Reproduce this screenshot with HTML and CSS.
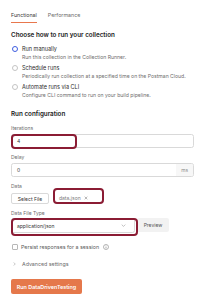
FILE: index.html
```html
<!DOCTYPE html>
<html>
<head>
<meta charset="utf-8">
<link rel="stylesheet" href="styles.css">
</head>
<body>
<div class="page">
  <div class="tabs">
    <div class="tab active">Functional</div>
    <div class="tab">Performance</div>
  </div>

  <div class="heading h1">Choose how to run your collection</div>

  <div class="options">
    <div class="option">
      <span class="radio checked"></span>
      <div class="opt-text">
        <div class="opt-title">Run manually</div>
        <div class="opt-desc">Run this collection in the Collection Runner.</div>
      </div>
    </div>
    <div class="option">
      <span class="radio"></span>
      <div class="opt-text">
        <div class="opt-title">Schedule runs</div>
        <div class="opt-desc">Periodically run collection at a specified time on the Postman Cloud.</div>
      </div>
    </div>
    <div class="option">
      <span class="radio"></span>
      <div class="opt-text">
        <div class="opt-title">Automate runs via CLI</div>
        <div class="opt-desc">Configure CLI command to run on your build pipeline.</div>
      </div>
    </div>
  </div>

  <div class="heading h2">Run configuration</div>

  <div class="field f-iter">
    <div class="label">Iterations</div>
    <div class="input-wrap">
      <div class="input">4</div>
      <div class="mark mark-iter"></div>
    </div>
  </div>

  <div class="field f-delay">
    <div class="label">Delay</div>
    <div class="input with-suffix">
      <span class="value">0</span>
      <span class="suffix">ms</span>
    </div>
  </div>

  <div class="field f-data">
    <div class="label">Data</div>
    <div class="data-row">
      <div class="btn-light">Select File</div>
      <div class="file-chip">
        <span>data.json</span>
        <svg class="x" viewBox="0 0 6 6" width="4" height="4"><path d="M1 1L5 5M5 1L1 5" stroke="#8a8a8a" stroke-width="0.9" fill="none"/></svg>
        <div class="mark mark-file"></div>
      </div>
    </div>
  </div>

  <div class="field f-type">
    <div class="label tight">Data File Type</div>
    <div class="type-row">
      <div class="select">
        <span>application/json</span>
        <svg class="chev" viewBox="0 0 8 5" width="5" height="3"><path d="M1 1L4 4L7 1" stroke="#8a8a8a" stroke-width="0.9" fill="none"/></svg>
        <div class="mark mark-select"></div>
      </div>
      <div class="btn-gray">Preview</div>
    </div>
  </div>

  <div class="check-row">
    <span class="checkbox"></span>
    <span class="check-label">Persist responses for a session</span>
    <svg class="info" viewBox="0 0 10 10" width="6" height="6"><circle cx="5" cy="5" r="4.2" stroke="#777" stroke-width="0.9" fill="none"/><path d="M5 4.3V7.4" stroke="#777" stroke-width="1"/><circle cx="5" cy="2.9" r="0.6" fill="#777"/></svg>
  </div>

  <div class="adv-row">
    <svg class="adv-chev" viewBox="0 0 5 8" width="3" height="4"><path d="M1 1L4 4L1 7" stroke="#888" stroke-width="1" fill="none"/></svg>
    <span>Advanced settings</span>
  </div>

  <div class="run-btn">Run DataDrivenTesting</div>
</div>
</body>
</html>
```

FILE: styles.css
```css
* { box-sizing: border-box; }
html, body { margin: 0; padding: 0; background: #ffffff; }
body {
  font-family: Inter, "Noto Sans", "Liberation Sans", sans-serif;
  color: #212121;
  width: 211px;
  height: 300px;
  overflow: hidden;
}
.page {
  margin-left: 11px;
  width: 183px;
  display: flex;
  flex-direction: column;
}
.tabs {
  display: flex;
  gap: 11px;
  padding-top: 12px;
}
.tab {
  font-size: 5.3px;
  line-height: 7px;
  color: #6b6b6b;
  padding-bottom: 3px;
  border-bottom: 1px solid transparent;
}
.tab.active {
  color: #3a3a3a;
  border-bottom-color: #e8774d;
}
.heading {
  font-weight: 600;
  font-size: 6.3px;
  line-height: 8px;
  color: #212121;
}
.h1 { margin-top: 8px; }
.h2 { margin-top: 11px; }
.options {
  display: flex;
  flex-direction: column;
  gap: 3px;
  margin-top: 6px;
}
.option {
  display: flex;
  align-items: flex-start;
  gap: 4px;
}
.radio {
  flex: none;
  width: 6.5px;
  height: 6.5px;
  margin-top: 0.8px;
  margin-left: 0.5px;
  border-radius: 50%;
  border: 0.9px solid #c4c4c4;
  background: #fff;
}
.radio.checked {
  border: 1.8px solid #3e5de0;
}
.opt-text { display: flex; flex-direction: column; }
.opt-title {
  font-size: 5.5px;
  line-height: 8px;
  color: #2b2b2b;
}
.opt-desc {
  font-size: 5.1px;
  line-height: 8px;
  color: #6e6e6e;
  white-space: nowrap;
}
.field { display: flex; flex-direction: column; }
.label {
  font-size: 5px;
  line-height: 8px;
  color: #6b6b6b;
  margin-bottom: 2px;
}
.label.tight { line-height: 7px; margin-bottom: 1px; }
.f-iter { margin-top: 6px; }
.f-delay { margin-top: 5px; }
.f-data { margin-top: 5px; }
.f-type { margin-top: 6px; }
.input-wrap { position: relative; }
.input {
  height: 14px;
  border: 0.8px solid #d9d9d9;
  border-radius: 2.5px;
  font-size: 5px;
  color: #333;
  display: flex;
  align-items: center;
  padding-left: 5px;
}
.with-suffix { padding-right: 0; justify-content: space-between; overflow: hidden; }
.suffix {
  height: 100%;
  display: flex;
  align-items: center;
  padding: 0 5px;
  background: #f7f7f7;
  color: #8a8a8a;
  font-size: 4.8px;
}
.mark {
  position: absolute;
  border: 2px solid #8b1c34;
  border-radius: 4px;
  pointer-events: none;
}
.mark-iter { left: 0; top: 0; width: 66px; height: 15px; }
.data-row {
  display: flex;
  align-items: center;
  gap: 4px;
  margin-top: 1px;
}
.btn-light {
  height: 11px;
  width: 38px;
  border: 0.8px solid #d9d9d9;
  border-radius: 2px;
  font-size: 5px;
  color: #333;
  display: flex;
  align-items: center;
  justify-content: center;
}
.file-chip {
  position: relative;
  display: flex;
  align-items: center;
  gap: 3px;
  height: 11px;
  padding-left: 6px;
  padding-bottom: 1.5px;
  font-size: 5px;
  color: #7a7a7a;
}
.file-chip .x { margin-top: 0.5px; }
.mark-file { left: 0; top: -5px; width: 51px; height: 16px; }
.type-row { display: flex; gap: 2px; align-items: flex-start; }
.select {
  position: relative;
  width: 124px;
  height: 15px;
  border: 0.8px solid #d9d9d9;
  border-radius: 2.5px;
  display: flex;
  align-items: center;
  justify-content: space-between;
  padding: 0 8px 0 5px;
  font-size: 5px;
  color: #333;
}
.mark-select { left: -1px; top: -1px; width: 127px; height: 18px; }
.btn-gray {
  width: 32px;
  height: 14px;
  background: #f2f2f2;
  border-radius: 2px;
  font-size: 5px;
  color: #555;
  display: flex;
  align-items: center;
  justify-content: center;
}
.check-row {
  display: flex;
  align-items: center;
  height: 8px;
  margin-top: 10px;
}
.checkbox {
  width: 6px;
  height: 6px;
  margin-left: 1px;
  border: 0.8px solid #b8b8b8;
  border-radius: 1px;
}
.check-label {
  font-size: 5.3px;
  color: #5a5a5a;
  margin-left: 3px;
}
.info { margin-left: 4px; }
.adv-row {
  display: flex;
  align-items: center;
  height: 8px;
  margin-top: 9px;
  font-size: 5.3px;
  color: #6b6b6b;
}
.adv-chev { margin-left: 2px; margin-right: 6px; }
.run-btn {
  margin-top: 11px;
  width: 71px;
  height: 15px;
  background: #e5784b;
  border-radius: 2px;
  color: #ffffff;
  font-weight: 600;
  font-size: 5.4px;
  display: flex;
  align-items: center;
  justify-content: center;
}
```
